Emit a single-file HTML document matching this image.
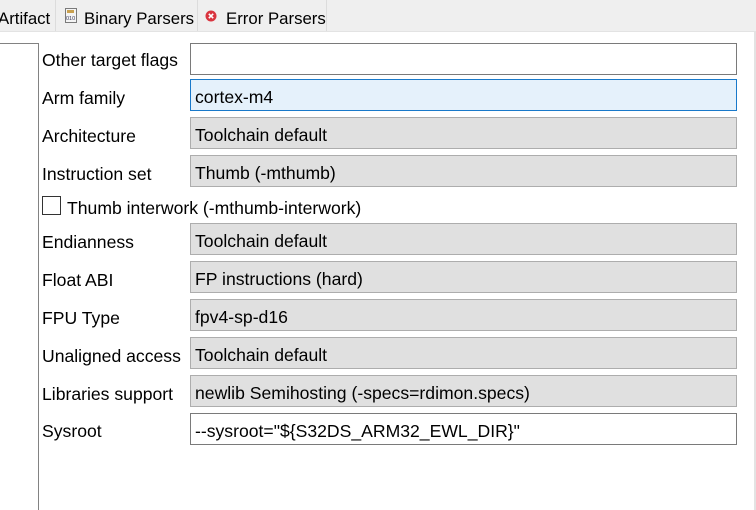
<!DOCTYPE html>
<html><head><style>
body{margin:0;width:756px;height:510px;background:#fff;position:relative;overflow:hidden;font-family:"Liberation Sans",sans-serif;font-size:17.6px;color:#000}
.tabbar{position:absolute;left:0;top:0;width:756px;height:31px;background:#efefef;border-bottom:1px solid #e3e3e3;font-size:16.8px}
.tab{position:absolute;top:0;height:31px;line-height:37px;border-right:1px solid #dcdcdc;white-space:nowrap}
.panel{position:absolute;left:0;top:32px;width:754px;height:478px;border-right:2px solid #e3e3e3;background:#fff}
.vl{position:absolute;left:38px;top:43px;width:1px;height:467px;background:#828282}
.hl{position:absolute;left:0;top:43px;width:38px;height:1px;background:#828282}
.lbl{position:absolute;left:42px;white-space:nowrap}
.f{position:absolute;left:190px;width:541px;height:30px;box-sizing:content-box;line-height:34px;padding-left:4px;white-space:nowrap;overflow:hidden}
.g{background:#e0e0e0;border:1px solid #adadad}
.w{background:#fff;border:1px solid #7a7a7a}
.b{background:#e5f1fb;border:1px solid #1979ca}
</style></head><body>
<div class="tabbar">
<div class="tab" style="left:-2px;width:57px;padding-left:0">Artifact</div>
<div class="tab" style="left:56px;width:141px">
<svg style="position:absolute;left:8px;top:8px" width="14" height="16" viewBox="0 0 14 16"><rect x="1.5" y="0.5" width="11" height="14" fill="#f4f4f4" stroke="#7a7a7a"/><rect x="3" y="2" width="7" height="3" fill="#c8a050"/><text x="2" y="12" font-size="5.5" font-family="Liberation Sans" fill="#335">010</text></svg>
<span style="position:absolute;left:28px">Binary Parsers</span></div>
<div class="tab" style="left:198px;width:128px">
<svg style="position:absolute;left:7px;top:10px" width="12" height="12" viewBox="0 0 12 12"><circle cx="6" cy="6" r="5.5" fill="#d9343f"/><path d="M3.8 3.8L8.2 8.2M8.2 3.8L3.8 8.2" stroke="#fff" stroke-width="1.6"/></svg>
<span style="position:absolute;left:28px">Error Parsers</span></div>
</div>
<div class="panel"></div>
<div class="hl"></div><div class="vl"></div>

<div class="lbl" style="top:50px">Other target flags</div><div class="f w" style="top:43px"></div>
<div class="lbl" style="top:88px">Arm family</div><div class="f b" style="top:79px">cortex-m4</div>
<div class="lbl" style="top:126px">Architecture</div><div class="f g" style="top:117px">Toolchain default</div>
<div class="lbl" style="top:164px">Instruction set</div><div class="f g" style="top:155px">Thumb (-mthumb)</div>
<div style="position:absolute;left:42px;top:196px;width:17px;height:17px;border:1px solid #333;background:#fff"></div>
<div class="lbl" style="left:67px;top:198px">Thumb interwork (-mthumb-interwork)</div>
<div class="lbl" style="top:232px">Endianness</div><div class="f g" style="top:223px">Toolchain default</div>
<div class="lbl" style="top:270px">Float ABI</div><div class="f g" style="top:261px">FP instructions (hard)</div>
<div class="lbl" style="top:308px">FPU Type</div><div class="f g" style="top:299px">fpv4-sp-d16</div>
<div class="lbl" style="top:346px">Unaligned access</div><div class="f g" style="top:337px">Toolchain default</div>
<div class="lbl" style="top:384px">Libraries support</div><div class="f g" style="top:375px">newlib Semihosting (-specs=rdimon.specs)</div>
<div class="lbl" style="top:421px">Sysroot</div><div class="f w" style="top:413px">--sysroot="${S32DS_ARM32_EWL_DIR}"</div>
</body></html>
